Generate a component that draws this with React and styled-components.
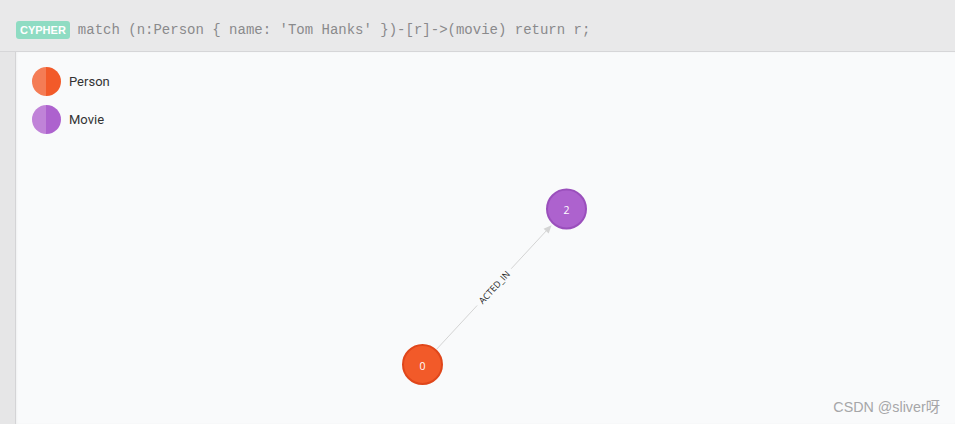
import React from 'react';
import styled, { createGlobalStyle } from 'styled-components';

const GlobalStyle = createGlobalStyle`
  html, body {
    margin: 0;
    padding: 0;
    background: #e8e8e9;
    overflow: hidden;
  }
`;

const Page = styled.div`
  width: 955px;
  height: 424px;
  display: flex;
  flex-direction: column;
  background: #e8e8e9;
  font-family: Roboto, "Noto Sans", sans-serif;
`;

const QueryBar = styled.div`
  height: 52px;
  box-sizing: border-box;
  display: flex;
  align-items: center;
  gap: 8px;
  padding: 9px 0 0 16px;
  background: #e9e9ea;
  border-bottom: 1px solid #d6d6d8;
`;

const Badge = styled.span`
  display: inline-flex;
  align-items: center;
  height: 18px;
  padding: 0 4px;
  border-radius: 3px;
  background: #8fdcc3;
  color: #fff;
  font-family: "Liberation Sans", Arial, sans-serif;
  font-weight: 700;
  font-size: 11px;
`;

const Query = styled.code`
  font-family: "Liberation Mono", monospace;
  font-size: 14px;
  color: #8a8a8c;
  white-space: pre;
`;

const Body = styled.div`
  flex: 1;
  display: flex;
`;

const Gutter = styled.div`
  width: 15px;
  background: #e6e6e7;
`;

const Canvas = styled.div`
  flex: 1;
  position: relative;
  background: #f9fafb;
  border-left: 1px solid #d4d4d6;
  box-shadow: inset 1px 0 2px rgba(0, 0, 0, 0.04);
  padding: 15px 0 0 16px;
`;

const Legend = styled.div`
  position: relative;
  z-index: 1;
  display: flex;
  flex-direction: column;
  gap: 9px;
`;

const LegendItem = styled.div`
  display: flex;
  align-items: center;
  gap: 8px;
  font-size: 13px;
  color: #333;
  line-height: 29px;
`;

const Dot = styled.span`
  width: 29px;
  height: 29px;
  border-radius: 50%;
  background: linear-gradient(90deg, ${p => p.$light} 50%, ${p => p.$dark} 50%);
`;

const Graph = styled.svg`
  position: absolute;
  inset: 0;
  width: 100%;
  height: 100%;
  font-family: "Open Sans", "Noto Sans", sans-serif;
`;

const Watermark = styled.div`
  position: absolute;
  right: 15px;
  bottom: 8px;
  font-family: "Liberation Sans", Arial, "Noto Sans CJK SC", sans-serif;
  font-size: 14.3px;
  color: #a6a6a8;
`;

const nodes = [
  { id: 0, x: 406.5, y: 312.5, fill: '#f25a29', stroke: '#e0461a' },
  { id: 2, x: 550.5, y: 157, fill: '#ad62ce', stroke: '#9a4fbc' },
];

function Edge({ from, to, label }) {
  const dx = to.x - from.x;
  const dy = to.y - from.y;
  const len = Math.hypot(dx, dy);
  const ux = dx / len;
  const uy = dy / len;
  const sx = from.x + ux * 21;
  const sy = from.y + uy * 21;
  const tx = to.x - ux * 22;
  const ty = to.y - uy * 22;
  const mx = (sx + tx) / 2;
  const my = (sy + ty) / 2;
  const angle = (Math.atan2(dy, dx) * 180) / Math.PI;
  const gap = 25;
  const ax = tx - ux * 8;
  const ay = ty - uy * 8;
  return (
    <g>
      <line x1={sx} y1={sy} x2={mx - ux * gap} y2={my - uy * gap} stroke="#d4d4d4" strokeWidth="1" />
      <line x1={mx + ux * gap} y1={my + uy * gap} x2={ax} y2={ay} stroke="#d4d4d4" strokeWidth="1" />
      <polygon
        points={`${tx},${ty} ${ax - uy * 3.5},${ay + ux * 3.5} ${ax + uy * 3.5},${ay - ux * 3.5}`}
        fill="#d4d4d4"
      />
      <text
        x={mx}
        y={my}
        transform={`rotate(${angle} ${mx} ${my})`}
        textAnchor="middle"
        dominantBaseline="central"
        fontSize="9"
        fill="#222"
      >
        {label}
      </text>
    </g>
  );
}

export default function App() {
  return (
    <Page>
      <GlobalStyle />
      <QueryBar>
        <Badge>CYPHER</Badge>
        <Query>match (n:Person {'{'} name: 'Tom Hanks' {'}'})-[r]-&gt;(movie) return r;</Query>
      </QueryBar>
      <Body>
        <Gutter />
        <Canvas>
          <Graph>
            <Edge from={nodes[0]} to={nodes[1]} label="ACTED_IN" />
            {nodes.map(n => (
              <g key={n.id}>
                <circle cx={n.x} cy={n.y} r="19.5" fill={n.fill} stroke={n.stroke} strokeWidth="2" />
                <text x={n.x} y={n.y + 1} textAnchor="middle" dominantBaseline="central" fontSize="10.5" fill="#fff">
                  {n.id}
                </text>
              </g>
            ))}
          </Graph>
          <Legend>
            <LegendItem><Dot $light="#f47c55" $dark="#f25a29" />Person</LegendItem>
            <LegendItem><Dot $light="#c083d8" $dark="#ad62ce" />Movie</LegendItem>
          </Legend>
          <Watermark>CSDN @sliver呀</Watermark>
        </Canvas>
      </Body>
    </Page>
  );
}
